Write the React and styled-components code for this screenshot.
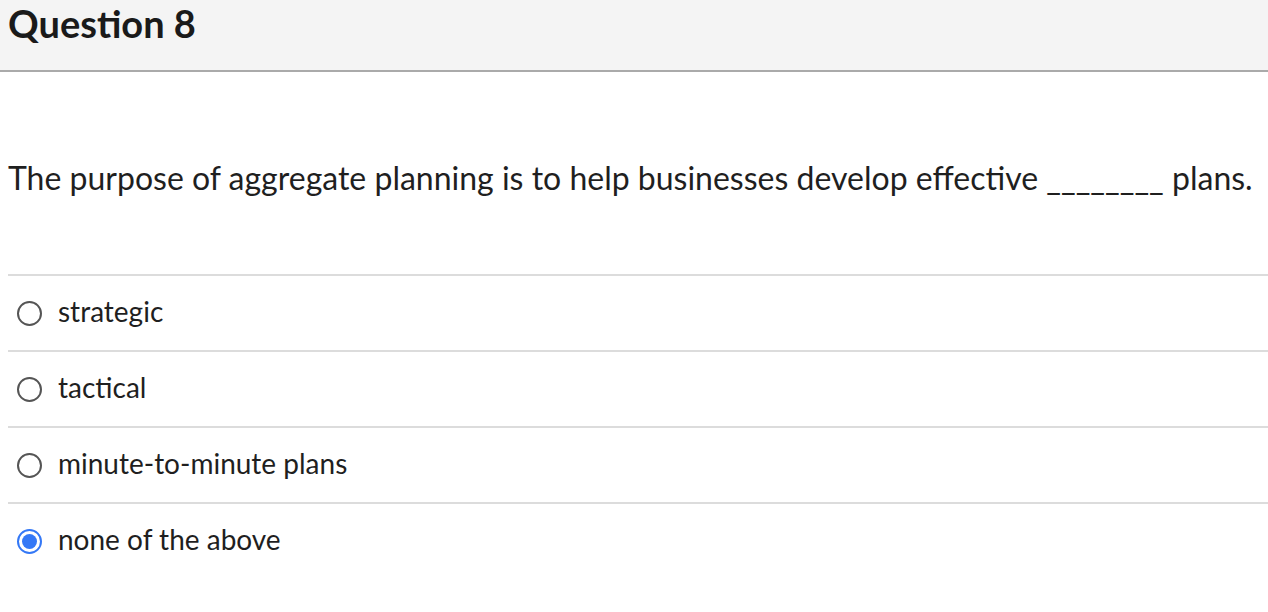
import React, { useState } from "react";
import styled, { createGlobalStyle } from "styled-components";

const GlobalStyle = createGlobalStyle`
  html, body {
    margin: 0;
    padding: 0;
    background: #ffffff;
    font-family: Lato, "Liberation Sans", sans-serif;
    color: #1f1f1f;
  }
`;

const options = ["strategic", "tactical", "minute-to-minute plans", "none of the above"];

const App = () => {
  const [selected, setSelected] = useState(3);

  return (
    <>
      <GlobalStyle />
      <Header>
        <Title>Question 8</Title>
      </Header>
      <Body>
        <Prompt>
          The purpose of aggregate planning is to help businesses develop effective ________ plans.
        </Prompt>
        <Answers>
          {options.map((text, i) => (
            <Answer key={text} onClick={() => setSelected(i)}>
              <Radio checked={selected === i} />
              <AnswerText>{text}</AnswerText>
            </Answer>
          ))}
        </Answers>
      </Body>
    </>
  );
};

const Header = styled.div`
  height: 70px;
  background: #f4f4f4;
  border-bottom: 2px solid #aaaaaa;
  padding: 0 8px;
  display: flex;
  align-items: center;
`;
const Title = styled.h2`
  margin: 0;
  margin-top: -24px;
  font-size: 38px;
  font-weight: 700;
  color: #1a1a1a;
`;
const Body = styled.div`
  padding-left: 8px;
`;
const Prompt = styled.p`
  margin: 0;
  padding: 86px 0 0;
  height: 202px;
  box-sizing: border-box;
  font-size: 32px;
  line-height: 40px;
`;
const Answers = styled.div`
  border-top: 2px solid #dcdcdc;
`;
const Answer = styled.label`
  display: flex;
  align-items: center;
  gap: 16px;
  height: 74px;
  padding-left: 9px;
  border-bottom: 2px solid #dcdcdc;
  cursor: pointer;
  &:last-child {
    border-bottom: none;
  }
`;
const Radio = styled.span`
  width: 25px;
  height: 25px;
  flex-shrink: 0;
  box-sizing: border-box;
  border-radius: 50%;
  border: 2px solid ${p => (p.checked ? "#3478f6" : "#555555")};
  display: flex;
  align-items: center;
  justify-content: center;
  &::after {
    content: "";
    display: ${p => (p.checked ? "block" : "none")};
    width: 15px;
    height: 15px;
    border-radius: 50%;
    background: #3478f6;
  }
`;
const AnswerText = styled.span`
  font-size: 28px;
  margin-bottom: 4px;
  color: #1f1f1f;
`;

export default App;
